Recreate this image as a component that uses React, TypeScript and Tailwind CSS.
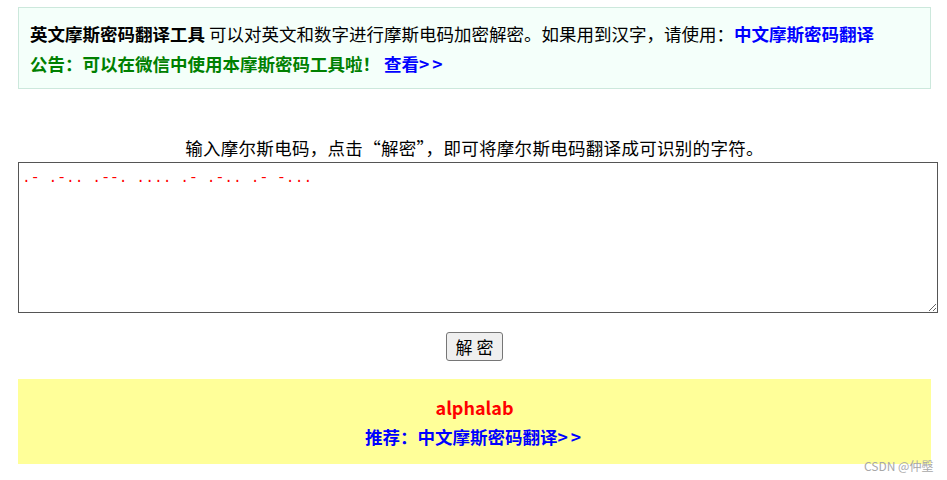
import React from "react";

const cjk = "font-['Microsoft_YaHei','Noto_Sans_CJK_SC',sans-serif]";

export default function App() {
  return (
    <div className={`relative h-[480px] w-[947px] bg-white text-black ${cjk}`}>
      <div className="pl-[18px] pt-[7px]">
        {/* notice box */}
        <div className="w-[913px] border border-[#cce8dc] bg-[#f4fffa] px-[11px] pt-[11px] pb-[9px] text-[17.5px] leading-[30px]">
          <div>
            <b>英文摩斯密码翻译工具</b> 可以对英文和数字进行摩斯电码加密解密。如果用到汉字，请使用：
            <a href="#" className="font-bold text-[#0000ff]">中文摩斯密码翻译</a>
          </div>
          <div className="font-bold text-[#008000]">
            公告：可以在微信中使用本摩斯密码工具啦！{" "}
            <a href="#" className="text-[#0000ff]">
              查看<span className="tracking-[3px]">&gt;&gt;</span>
            </a>
          </div>
        </div>

        <div className="mt-[46px] mb-[1px] w-[913px] text-center text-[17.5px] leading-[26px] tracking-[0.3px]">
          输入摩尔斯电码，点击“解密”，即可将摩尔斯电码翻译成可识别的字符。
        </div>

        <textarea
          className="block h-[151px] w-[920px] resize-y border border-[#555] px-[3px] pt-[4px] font-['Liberation_Mono',monospace] text-[14.67px] text-[#ff0000] outline-none"
          defaultValue=".- .-.. .--. .... .- .-.. .- -..."
        />

        <div className="mt-[19px] flex w-[913px] justify-center">
          <button className="h-[29px] w-[57px] rounded-[3px] border border-[#767676] bg-[#efefef] text-[17px] leading-none">
            解 密
          </button>
        </div>

        <div className="mt-[18px] flex h-[85px] w-[913px] flex-col items-center justify-center bg-[#ffff99] font-bold">
          <div className="text-[18px] leading-[30px] text-[#ff0000]">alphalab</div>
          <a href="#" className="text-[17.5px] leading-[30px] text-[#0000ff]">
            推荐：中文摩斯密码翻译<span className="tracking-[3px]">&gt;&gt;</span>
          </a>
        </div>
      </div>

      <div className="absolute left-[864px] top-[457px] text-[12px] text-[#a8a8a8]">CSDN @仲壂</div>
    </div>
  );
}
